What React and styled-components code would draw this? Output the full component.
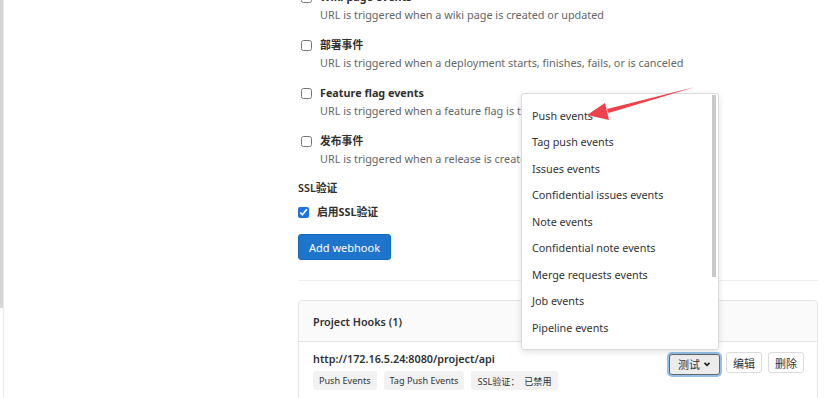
import React from "react";
import styled, { createGlobalStyle } from "styled-components";

const Global = createGlobalStyle`
  html, body { margin: 0; padding: 0; background: #fff; }
  body {
    width: 830px; height: 398px; overflow: hidden;
    font-family: "Noto Sans", "Noto Sans CJK SC", sans-serif;
    color: #303030;
  }
  * { box-sizing: border-box; }
`;

const Page = styled.div`
  position: relative;
  display: flex;
  align-items: flex-start;
  width: 830px;
  height: 398px;
  overflow: hidden;
`;

const Sidebar = styled.div`
  width: 298px;
  flex: none;
  display: flex;
`;

const Rail = styled.div`
  width: 4px;
  height: 398px;
  border-right: 1px solid #ececec;
`;

const RailThumb = styled.div`
  width: 3px;
  height: 308px;
  background: #d6d6d6;
`;

const Main = styled.main`
  flex: 1;
  padding-right: 12px;
  margin-top: -12px;
  display: flex;
  flex-direction: column;
  & > * { flex-shrink: 0; }
`;

const EventRow = styled.div`
  display: flex;
  align-items: flex-start;
  gap: 8px;
  padding-left: 3px;
  margin-bottom: 12px;
`;

const Box = styled.input.attrs({ type: "checkbox" })`
  width: 11px;
  height: 11px;
  margin: ${(p) => (p.$flat ? "0" : "4px 0 0 0")};
  flex: none;
  accent-color: #1a73e8;
`;

const EventText = styled.div`
  display: flex;
  flex-direction: column;
`;

const Label = styled.div`
  font-size: 10.8px;
  font-weight: 700;
  line-height: 18px;
  color: #303030;
`;

const Desc = styled.div`
  font-size: 10.85px;
  line-height: 18px;
  color: #666;
  white-space: nowrap;
`;

const SectionTitle = styled.div`
  font-size: 10.8px;
  font-weight: 600;
  line-height: 18px;
  margin-top: -1px;
  color: #303030;
`;

const CheckRow = styled.label`
  display: flex;
  align-items: center;
  gap: 8px;
  margin-top: 6px;
  height: 18px;
`;

const PrimaryButton = styled.button`
  align-self: flex-start;
  margin-top: 13px;
  height: 26px;
  padding: 0 10px;
  background: #1f75cb;
  border: 1px solid #1068bf;
  border-radius: 3px;
  color: #fff;
  font-family: inherit;
  font-size: 11px;
`;

const Divider = styled.hr`
  width: 100%;
  border: 0;
  border-top: 1px solid #efefef;
  margin: 20px 0 0 0;
`;

const Card = styled.section`
  margin-top: 19px;
  border: 1px solid #e5e5e5;
  border-radius: 4px;
  height: 120px;
`;

const CardHeader = styled.div`
  height: 41px;
  display: flex;
  align-items: center;
  padding-left: 14px;
  background: #fafafa;
  border-bottom: 1px solid #e5e5e5;
  border-radius: 4px 4px 0 0;
  font-size: 10.8px;
  font-weight: 600;
  color: #303030;
`;

const HookRow = styled.div`
  display: flex;
  justify-content: space-between;
  align-items: flex-start;
  padding: 8px 13px 0 14px;
`;

const HookInfo = styled.div`
  display: flex;
  flex-direction: column;
`;

const HookUrl = styled.div`
  font-size: 10.8px;
  font-weight: 600;
  line-height: 18px;
  color: #303030;
`;

const Badges = styled.div`
  display: flex;
  gap: 7px;
  margin-top: 3px;
`;

const Badge = styled.span`
  height: 19px;
  display: inline-flex;
  align-items: center;
  padding: 0 6px;
  background: #f2f2f2;
  border-radius: 3px;
  font-size: 9.1px;
  color: #333;
  white-space: pre;
`;

const Actions = styled.div`
  display: flex;
  gap: 6px;
  margin-top: 2px;
`;

const ActionWrap = styled.div`
  position: relative;
`;

const ActionButton = styled.button`
  height: 21px;
  padding: 0 ${(p) => (p.$active ? "8px" : "6px")};
  display: inline-flex;
  align-items: center;
  gap: 3px;
  font-family: inherit;
  font-size: 11px;
  color: #333;
  background: ${(p) => (p.$active ? "#ececec" : "#fff")};
  border: 1px solid ${(p) => (p.$active ? "#666" : "#dcdcdc")};
  border-radius: 3px;
  box-shadow: ${(p) => (p.$active ? "0 0 0 2px #93c0ea" : "none")};
`;

const Menu = styled.div`
  position: absolute;
  right: 1px;
  bottom: calc(100% + 2px);
  width: 198px;
  height: 257px;
  display: flex;
  background: #fff;
  border: 1px solid #dcdcdc;
  border-radius: 3px;
  box-shadow: 0 2px 6px rgba(0, 0, 0, 0.12);
  overflow: hidden;
  z-index: 5;
`;

const MenuList = styled.ul`
  flex: 1;
  margin: 0;
  padding: 8.5px 0 0 0;
  list-style: none;
  overflow: hidden;
`;

const ScrollTrack = styled.div`
  width: 7px;
  flex: none;
  padding: 1px 2px 0 1px;
`;

const ScrollThumb = styled.div`
  width: 4px;
  height: 182px;
  background: #c9c9c9;
`;

const MenuItem = styled.li`
  height: 26.5px;
  line-height: 26.5px;
  padding-left: 10px;
  font-size: 10.8px;
  color: #333;
  white-space: nowrap;
`;

const Arrow = styled.svg`
  position: absolute;
  left: 580px;
  top: 82px;
  z-index: 10;
`;

const Chevron = () => (
  <svg width="8" height="8" viewBox="0 0 8 8">
    <path d="M1.5 2.8 L4 5.3 L6.5 2.8" fill="none" stroke="#222" strokeWidth="1.7" />
  </svg>
);

const events = [
  ["Wiki page events", "URL is triggered when a wiki page is created or updated"],
  ["部署事件", "URL is triggered when a deployment starts, finishes, fails, or is canceled"],
  ["Feature flag events", "URL is triggered when a feature flag is turned on or off"],
  ["发布事件", "URL is triggered when a release is created or updated"],
];

const menuItems = [
  "Push events",
  "Tag push events",
  "Issues events",
  "Confidential issues events",
  "Note events",
  "Confidential note events",
  "Merge requests events",
  "Job events",
  "Pipeline events",
  "Wiki page events",
  "Deployment events",
  "Feature flag events",
  "Releases events",
];

export default function App() {
  return (
    <>
      <Global />
      <Page>
        <Sidebar>
          <Rail>
            <RailThumb />
          </Rail>
        </Sidebar>
        <Main>
          {events.map(([l, d]) => (
            <EventRow key={l}>
              <Box />
              <EventText>
                <Label>{l}</Label>
                <Desc>{d}</Desc>
              </EventText>
            </EventRow>
          ))}
          <SectionTitle>SSL验证</SectionTitle>
          <CheckRow>
            <Box defaultChecked $flat />
            <Label>启用SSL验证</Label>
          </CheckRow>
          <PrimaryButton>Add webhook</PrimaryButton>
          <Divider />
          <Card>
            <CardHeader>Project Hooks (1)</CardHeader>
            <HookRow>
              <HookInfo>
                <HookUrl>http://172.16.5.24:8080/project/api</HookUrl>
                <Badges>
                  <Badge>Push Events</Badge>
                  <Badge>Tag Push Events</Badge>
                  <Badge>{"SSL验证：  已禁用"}</Badge>
                </Badges>
              </HookInfo>
              <Actions>
                <ActionWrap>
                  <Menu>
                    <MenuList>
                      {menuItems.map((m) => (
                        <MenuItem key={m}>{m}</MenuItem>
                      ))}
                    </MenuList>
                    <ScrollTrack>
                      <ScrollThumb />
                    </ScrollTrack>
                  </Menu>
                  <ActionButton $active>
                    测试 <Chevron />
                  </ActionButton>
                </ActionWrap>
                <ActionButton>编辑</ActionButton>
                <ActionButton>删除</ActionButton>
              </Actions>
            </HookRow>
          </Card>
        </Main>
        <Arrow width="120" height="45" viewBox="0 0 120 45">
          <path d="M115 5 L27 27 L28.5 31 Z" fill="#ef4149" />
          <path d="M7 33 L25 21 L29 38 Z" fill="#ef4149" />
        </Arrow>
      </Page>
    </>
  );
}
